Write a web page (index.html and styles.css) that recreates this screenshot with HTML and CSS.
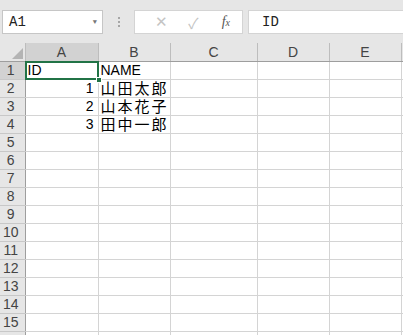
FILE: index.html
```html
<!DOCTYPE html>
<html lang="ja">

<head>
    <meta charset="UTF-8" />
    <title>Book1 - Excel</title>
    <link rel="stylesheet" href="styles.css">
</head>

<body>

    <div class="formula-bar">
        <div class="name-box">
            <span>A1</span>
            <span class="drop">&#9660;</span>
        </div>
        <div class="grip"><i></i><i></i><i></i></div>
        <div class="fx-buttons">
            <span class="fx-btn muted">&#10005;</span>
            <span class="fx-btn muted">&#10003;</span>
            <span class="fx-btn fx"><i>f</i><small>x</small></span>
        </div>
        <div class="formula-input">ID</div>
    </div>

    <table class="sheet">
        <colgroup>
            <col class="c-row">
            <col class="c-a">
            <col class="c-b">
            <col class="c-c">
            <col class="c-d">
            <col class="c-e">
            <col class="c-f">
        </colgroup>
        <thead>
            <tr>
                <th class="corner"><span class="tri"></span></th>
                <th class="active">A</th>
                <th>B</th>
                <th>C</th>
                <th>D</th>
                <th>E</th>
                <th></th>
            </tr>
        </thead>
        <tbody>
            <tr>
                <th class="active">1</th>
                <td class="selected">ID<span class="handle"></span></td>
                <td>NAME</td>
                <td></td><td></td><td></td><td></td>
            </tr>
            <tr>
                <th>2</th>
                <td class="num">1</td>
                <td class="jp">山田太郎</td>
                <td></td><td></td><td></td><td></td>
            </tr>
            <tr>
                <th>3</th>
                <td class="num">2</td>
                <td class="jp">山本花子</td>
                <td></td><td></td><td></td><td></td>
            </tr>
            <tr>
                <th>4</th>
                <td class="num">3</td>
                <td class="jp">田中一郎</td>
                <td></td><td></td><td></td><td></td>
            </tr>
            <tr><th>5</th><td></td><td></td><td></td><td></td><td></td><td></td></tr>
            <tr><th>6</th><td></td><td></td><td></td><td></td><td></td><td></td></tr>
            <tr><th>7</th><td></td><td></td><td></td><td></td><td></td><td></td></tr>
            <tr><th>8</th><td></td><td></td><td></td><td></td><td></td><td></td></tr>
            <tr><th>9</th><td></td><td></td><td></td><td></td><td></td><td></td></tr>
            <tr><th>10</th><td></td><td></td><td></td><td></td><td></td><td></td></tr>
            <tr><th>11</th><td></td><td></td><td></td><td></td><td></td><td></td></tr>
            <tr><th>12</th><td></td><td></td><td></td><td></td><td></td><td></td></tr>
            <tr><th>13</th><td></td><td></td><td></td><td></td><td></td><td></td></tr>
            <tr><th>14</th><td></td><td></td><td></td><td></td><td></td><td></td></tr>
            <tr><th>15</th><td></td><td></td><td></td><td></td><td></td><td></td></tr>
            <tr><th></th><td></td><td></td><td></td><td></td><td></td><td></td></tr>
        </tbody>
    </table>

</body>

</html>
```

FILE: styles.css
```css
* {
    margin: 0;
    padding: 0;
    box-sizing: border-box;
}

body {
    font-family: 'Liberation Sans', 'Noto Sans CJK JP', sans-serif;
    background: #ffffff;
    width: 403px;
    height: 335px;
    overflow: hidden;
}

/* 数式バー */
.formula-bar {
    height: 43px;
    background: #e6e6e6;
    display: flex;
    align-items: flex-start;
    padding: 10px 0 0 2px;
}

.name-box {
    width: 101px;
    height: 24px;
    background: #ffffff;
    border: 1px solid #c6c6c6;
    display: flex;
    align-items: center;
    justify-content: space-between;
    padding: 0 5px 0 6px;
    font-family: 'Liberation Mono', monospace;
    font-size: 14px;
    color: #222;
}

.name-box .drop {
    font-size: 7px;
    color: #777;
}

.grip {
    width: 31px;
    height: 24px;
    display: flex;
    flex-direction: column;
    align-items: center;
    justify-content: center;
    gap: 2px;
}

.grip i {
    width: 2px;
    height: 2px;
    background: #a6a6a6;
}

.fx-buttons {
    width: 109px;
    height: 24px;
    background: #ffffff;
    border: 1px solid #d4d4d4;
    display: flex;
    align-items: center;
    padding-left: 10px;
}

.fx-btn {
    width: 36px;
    text-align: center;
    font-size: 15px;
}

.fx-btn.muted {
    color: #c4c4c4;
}

.fx {
    font-family: 'Liberation Serif', serif;
    color: #555;
    font-size: 14px;
}

.fx small {
    font-size: 10px;
    font-style: italic;
}

.formula-input {
    flex: 1;
    height: 24px;
    margin-left: 5px;
    background: #ffffff;
    border: 1px solid #d4d4d4;
    border-right: none;
    padding: 3px 0 0 13px;
    font-family: 'Liberation Mono', monospace;
    font-size: 14px;
    color: #222;
}

/* シート */
.sheet {
    border-collapse: collapse;
    table-layout: fixed;
    width: 421px;
    font-size: 14px;
}

.c-row { width: 25px; }
.c-a { width: 73px; }
.c-b { width: 72px; }
.c-c { width: 87px; }
.c-d { width: 72px; }
.c-e { width: 72px; }
.c-f { width: 20px; }

.sheet th {
    background: #e6e6e6;
    font-weight: normal;
    color: #444;
    height: 18px;
    padding: 0;
    font-size: 14px;
    line-height: 16px;
}

.sheet thead th {
    border-right: 1px solid #bdbdbd;
    border-bottom: 1px solid #9e9e9e;
    text-align: center;
}

.sheet tbody th {
    border-right: 1px solid #9e9e9e;
    border-bottom: 1px solid #c8c8c8;
    text-align: center;
    padding-right: 3px;
}

.sheet th.active {
    background: #d2d2d2;
}

.corner {
    position: relative;
}

.tri {
    position: absolute;
    right: 2px;
    bottom: 2px;
    width: 0;
    height: 0;
    border-left: 11px solid transparent;
    border-bottom: 11px solid #b4b4b4;
}

.sheet td {
    height: 18px;
    border-right: 1px solid #d4d4d4;
    border-bottom: 1px solid #d4d4d4;
    padding: 0 2px;
    color: #000;
    line-height: 16px;
    white-space: nowrap;
    overflow: visible;
}

.sheet td.num {
    text-align: right;
    padding-right: 4px;
}

.sheet td.jp {
    font-family: 'Noto Sans CJK JP', sans-serif;
    font-size: 15px;
    line-height: 16px;
    letter-spacing: 2px;
}

/* 選択セル */
.selected {
    position: relative;
}

.selected::after {
    content: "";
    position: absolute;
    left: -1px;
    top: -1px;
    right: -1px;
    bottom: -1px;
    border: 2px solid #217346;
}

.handle {
    position: absolute;
    right: -4px;
    bottom: -4px;
    width: 6px;
    height: 6px;
    background: #217346;
    border: 1px solid #ffffff;
    z-index: 1;
}
```
